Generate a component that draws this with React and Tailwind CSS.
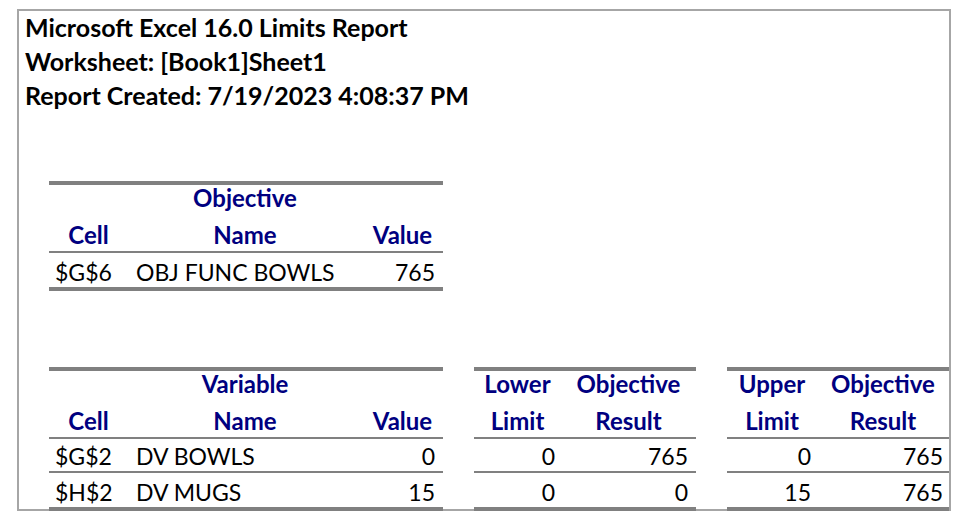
import React from 'react';

const FONT = { fontFamily: 'Lato, "Liberation Sans", sans-serif' };

// one sheet-like block: 2 header rows + data rows, thick rules top/bottom
const ReportTable = ({ cols, head1, head2, rows, className = '' }) => (
  <div className={`relative z-10 border-t-4 border-b-4 border-[#808080] ${className}`}>
    <div className="flex h-[34px]">
      {cols.map((c, i) => (
        <div key={i} style={{ width: c.w }} className="flex items-end justify-center pb-[9px] text-[24px] font-bold text-[#000080] leading-none whitespace-nowrap">
          {head1[i]}
        </div>
      ))}
    </div>
    <div className="flex h-[34px] border-b-2 border-[#808080]">
      {cols.map((c, i) => (
        <div key={i} style={{ width: c.w }} className="flex items-end justify-center pb-[4px] text-[24px] font-bold text-[#000080] leading-none whitespace-nowrap">
          {head2[i]}
        </div>
      ))}
    </div>
    {rows.map((r, ri) => (
      <div key={ri} className={`flex h-[34px] ${ri < rows.length - 1 ? 'border-b-2 border-[#808080]' : ''}`}>
        {cols.map((c, i) => (
          <div
            key={i}
            style={{ width: c.w, paddingLeft: c.pl, paddingRight: c.pr }}
            className={`flex items-end pb-[3px] text-[23px] text-black leading-none whitespace-nowrap ${c.align === 'right' ? 'justify-end' : 'justify-start'}`}
          >
            {r[i]}
          </div>
        ))}
      </div>
    ))}
  </div>
);

const mainCols = [
  { w: 79, pl: 6, align: 'left' },
  { w: 234, pl: 8, align: 'left' },
  { w: 81, pr: 8, align: 'right' },
];
const lowerCols = [
  { w: 87, pr: 6, align: 'right' },
  { w: 135, pr: 8, align: 'right' },
];
const upperCols = [
  { w: 90, pr: 6, align: 'right' },
  { w: 132, pr: 6, align: 'right' },
];

export default function App() {
  return (
    <div className="w-[954px] h-[518px] bg-white pt-[9px] pl-[17px]" style={FONT}>
      <div className="w-[934px] h-[502px] border-2 border-[#a6a6a6] flex flex-col">
        <div className="pl-[6px] text-[25px] font-bold text-black leading-[34px] -mt-[1px]">
          <div>Microsoft Excel 16.0 Limits Report</div>
          <div>Worksheet: [Book1]Sheet1</div>
          <div>Report Created: 7/19/2023 4:08:37 PM</div>
        </div>

        <div className="ml-[30px] mt-[69px] w-[394px]">
          <ReportTable
            cols={mainCols}
            head1={['', 'Objective', '']}
            head2={['Cell', 'Name', 'Value']}
            rows={[['$G$6', 'OBJ FUNC BOWLS', '765']]}
          />
        </div>

        <div className="mt-auto -mb-[2px] ml-[30px] flex gap-[31px]">
          <ReportTable
            cols={mainCols}
            head1={['', 'Variable', '']}
            head2={['Cell', 'Name', 'Value']}
            rows={[
              ['$G$2', 'DV BOWLS', '0'],
              ['$H$2', 'DV MUGS', '15'],
            ]}
          />
          <ReportTable
            cols={lowerCols}
            head1={['Lower', 'Objective']}
            head2={['Limit', 'Result']}
            rows={[
              ['0', '765'],
              ['0', '0'],
            ]}
          />
          <ReportTable
            cols={upperCols}
            head1={['Upper', 'Objective']}
            head2={['Limit', 'Result']}
            rows={[
              ['0', '765'],
              ['15', '765'],
            ]}
          />
        </div>
      </div>
    </div>
  );
}
